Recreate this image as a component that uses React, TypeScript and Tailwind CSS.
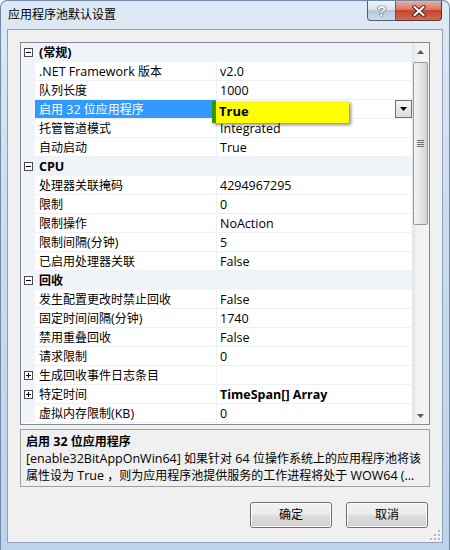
import React from 'react'

type Row =
  | { kind: 'cat'; label: string }
  | { kind: 'prop'; label: string; value?: string; plus?: boolean; bold?: boolean; selected?: boolean }

const ROWS: Row[] = [
  { kind: 'cat', label: '(常规)' },
  { kind: 'prop', label: '.NET Framework 版本', value: 'v2.0' },
  { kind: 'prop', label: '队列长度', value: '1000' },
  { kind: 'prop', label: '启用 32 位应用程序', value: '', selected: true },
  { kind: 'prop', label: '托管管道模式', value: 'Integrated' },
  { kind: 'prop', label: '自动启动', value: 'True' },
  { kind: 'cat', label: 'CPU' },
  { kind: 'prop', label: '处理器关联掩码', value: '4294967295' },
  { kind: 'prop', label: '限制', value: '0' },
  { kind: 'prop', label: '限制操作', value: 'NoAction' },
  { kind: 'prop', label: '限制间隔(分钟)', value: '5' },
  { kind: 'prop', label: '已启用处理器关联', value: 'False' },
  { kind: 'cat', label: '回收' },
  { kind: 'prop', label: '发生配置更改时禁止回收', value: 'False' },
  { kind: 'prop', label: '固定时间间隔(分钟)', value: '1740' },
  { kind: 'prop', label: '禁用重叠回收', value: 'False' },
  { kind: 'prop', label: '请求限制', value: '0' },
  { kind: 'prop', label: '生成回收事件日志条目', value: '', plus: true },
  { kind: 'prop', label: '特定时间', value: 'TimeSpan[] Array', plus: true, bold: true },
  { kind: 'prop', label: '虚拟内存限制(KB)', value: '0' },
]

// Latin runs are a touch larger than the CJK glyphs, as in YaHei
function T({ s }: { s: string }) {
  const parts = s.split(/([\x20-\x7e]+)/)
  return (
    <>
      {parts.map((p, i) =>
        p === '' ? null : i % 2 === 1 ? (
          <span key={i} className="text-[12.5px]">
            {p}
          </span>
        ) : (
          <React.Fragment key={i}>{p}</React.Fragment>
        )
      )}
    </>
  )
}

function Expander({ plus }: { plus?: boolean }) {
  return (
    <svg width="9" height="9" viewBox="0 0 9 9" className="block">
      <rect x="0.5" y="0.5" width="8" height="8" fill="#fff" stroke="#4a4a4a" />
      <line x1="2" y1="4.5" x2="7" y2="4.5" stroke="#000" />
      {plus && <line x1="4.5" y1="2" x2="4.5" y2="7" stroke="#000" />}
    </svg>
  )
}

function GridRow({ row }: { row: Row }) {
  if (row.kind === 'cat') {
    return (
      <div className="flex h-[19px] bg-[#f0f3f8]">
        <div className="w-[14px] shrink-0 flex items-center justify-center">
          <Expander />
        </div>
        <div className="flex-1 pl-[4px] font-bold leading-[20px]">
          <T s={row.label} />
        </div>
      </div>
    )
  }
  return (
    <div className="flex h-[19px]">
      <div className="w-[14px] shrink-0 bg-[#f0f3f8] flex items-center justify-center">
        {row.plus && <Expander plus />}
      </div>
      <div
        className={`w-[182px] shrink-0 pl-[4px] leading-[19px] border-b border-r border-[#edf0f4] whitespace-nowrap ${
          row.selected ? 'bg-[#3399ff] text-white' : ''
        }`}
      >
        <T s={row.label} />
      </div>
      <div className="flex-1 flex border-b border-[#edf0f4] min-w-0">
        <div className={`pl-[3px] leading-[19px] whitespace-nowrap ${row.bold ? 'font-bold' : ''}`}>
          <T s={row.value ?? ''} />
        </div>
        {row.selected && (
          <div className="ml-auto w-[17px] h-[18px] border border-[#707070] bg-[linear-gradient(to_bottom,#f4f4f4,#dcdcdc)] flex items-center justify-center">
            <svg width="7" height="4" viewBox="0 0 7 4">
              <path d="M0 0H7L3.5 4Z" fill="#000" />
            </svg>
          </div>
        )}
      </div>
    </div>
  )
}

function ScrollBar() {
  return (
    <div className="w-[17px] shrink-0 flex flex-col bg-[linear-gradient(to_right,#e3e3e3,#f3f3f3_30%,#f3f3f3)]">
      <div className="h-[17px] flex items-center justify-center">
        <svg width="7" height="4" viewBox="0 0 7 4">
          <path d="M0 4H7L3.5 0Z" fill="#4d5b6b" />
        </svg>
      </div>
      <div className="mt-[2px] mx-[1px] h-[163px] rounded-[2px] border border-[#989898] bg-[linear-gradient(to_right,#f5f5f5,#e6e6e6_50%,#d2d2d2)] flex items-center justify-center">
        <div className="flex flex-col gap-[1px]">
          <div className="w-[7px] h-[1px] bg-[#6e6e6e]" />
          <div className="w-[7px] h-[1px] bg-[#6e6e6e]" />
          <div className="w-[7px] h-[1px] bg-[#6e6e6e]" />
          <div className="w-[7px] h-[1px] bg-[#6e6e6e]" />
        </div>
      </div>
      <div className="flex-1" />
      <div className="h-[17px] flex items-center justify-center">
        <svg width="7" height="4" viewBox="0 0 7 4">
          <path d="M0 0H7L3.5 4Z" fill="#4d5b6b" />
        </svg>
      </div>
    </div>
  )
}

function Button({ label }: { label: string }) {
  return (
    <button className="w-[82px] h-[26px] rounded-[3px] border border-[#707070] bg-[linear-gradient(to_bottom,#f2f2f2_0%,#ebebeb_48%,#dddddd_52%,#cfcfcf_100%)] shadow-[inset_0_0_0_1px_#fcfcfc] text-[12px] text-black">
      {label}
    </button>
  )
}

function ResizeGrip() {
  const dots = [
    [8, 0],
    [8, 4],
    [4, 4],
    [8, 8],
    [4, 8],
    [0, 8],
  ]
  return (
    <svg width="11" height="11" viewBox="0 0 11 11">
      {dots.map(([x, y], i) => (
        <g key={i}>
          <rect x={x + 1} y={y + 1} width="2" height="2" fill="#fff" />
          <rect x={x} y={y} width="2" height="2" fill="#b8b8b8" />
        </g>
      ))}
    </svg>
  )
}

export default function App() {
  return (
    <div className="relative w-[450px] h-[550px] overflow-hidden flex flex-col rounded-t-[7px] border border-b-0 border-[#6f8aa8] bg-[linear-gradient(to_bottom,#dfe9f5_0%,#cddcee_40%,#bed2ea_100%)] font-['Open_Sans','Noto_Sans_CJK_SC',sans-serif] text-[12px] text-black">
      {/* Title bar */}
      <div className="h-[28px] shrink-0 flex items-start">
        <div className="pl-[7px] pt-[5px] leading-[18px] text-[12px] text-black">应用程序池默认设置</div>
        <div className="ml-auto mr-[7px] flex">
          <div className="w-[29px] h-[20px] rounded-bl-[4px] border border-t-0 border-[#4e6079] bg-[linear-gradient(to_bottom,#eef3f9_0%,#d9e3ef_45%,#b7c8dc_50%,#cbd9e9_100%)] flex items-center justify-center">
            <span className="font-['Liberation_Sans',sans-serif] font-bold text-[15px] leading-none text-white [text-shadow:0_0_1px_#35475f,0_0_1px_#35475f,0_0_1px_#35475f]">
              ?
            </span>
          </div>
          <div className="w-[46px] h-[20px] rounded-br-[4px] border border-t-0 border-l-0 border-[#4e3a3a] bg-[linear-gradient(to_bottom,#eab0a2_0%,#d8775f_45%,#c5432a_50%,#d36a50_100%)] flex items-center justify-center">
            <svg width="14" height="12" viewBox="0 0 14 12">
              <path d="M2.5 2L11.5 10M11.5 2L2.5 10" stroke="#4b2a22" strokeWidth="4" strokeLinecap="square" />
              <path d="M2.5 2L11.5 10M11.5 2L2.5 10" stroke="#fff" strokeWidth="2" strokeLinecap="square" />
            </svg>
          </div>
        </div>
      </div>

      {/* Client area */}
      <div className="mx-[6px] h-[514px] shrink-0 border border-[#8da2ba] bg-[#f0f0f0] flex flex-col pt-[12px] pl-[12px] pr-[12px]">
        {/* Property grid */}
        <div className="h-[383px] border border-[#828790] bg-white flex">
          <div className="flex-1 flex flex-col min-w-0">
            {ROWS.map((r, i) => (
              <GridRow key={i} row={r} />
            ))}
          </div>
          <ScrollBar />
        </div>

        {/* Description */}
        <div className="mt-[4px] h-[58px] border border-[#a0a0a0] bg-[#f0f0f0] pl-[5px] pt-[3px] leading-[17px] whitespace-nowrap overflow-hidden">
          <div className="font-bold">
            <T s="启用 32 位应用程序" />
          </div>
          <div>
            <T s="[enable32BitAppOnWin64] 如果针对 64 位操作系统上的应用程序池将该" />
          </div>
          <div>
            <T s="属性设为 True ，则为应用程序池提供服务的工作进程将处于 WOW64 (..." />
          </div>
        </div>

        {/* Buttons */}
        <div className="mt-[15px] flex justify-end gap-[14px] pr-[2px]">
          <Button label="确定" />
          <Button label="取消" />
        </div>

        <div className="mt-auto mb-[1px] -mr-[11px] flex justify-end">
          <ResizeGrip />
        </div>
      </div>

      {/* Annotation highlight over the selected value */}
      <div className="absolute left-[211px] top-[100px] w-[137px] h-[22px] bg-[#ffff00] border-l-[4px] border-[#339a00] shadow-[2px_2px_3px_rgba(0,0,0,0.45)] flex items-center pl-[3px]">
        <span className="font-bold text-[13px] text-black">True</span>
      </div>
    </div>
  )
}
